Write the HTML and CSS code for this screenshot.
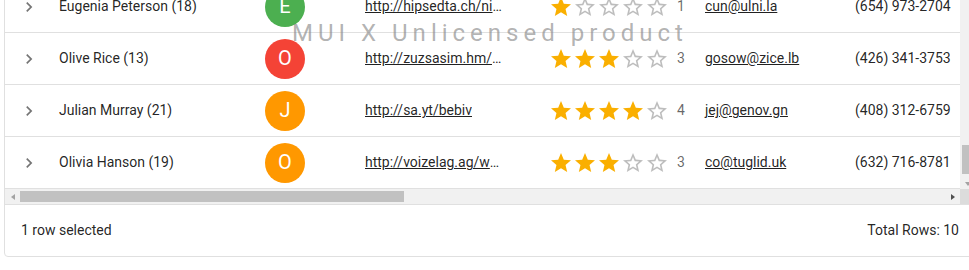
FILE: index.html
```html
<!DOCTYPE html>
<html lang="en">
<head>
    <meta charset="UTF-8">
    <meta name="viewport" content="width=device-width, initial-scale=1.0">
    <title>Data Grid</title>
    <link rel="stylesheet" href="styles.css">
</head>
<body>
    <svg class="defs" width="0" height="0">
        <symbol id="star" viewBox="0 0 24 24"><path d="M12 17.27L18.18 21l-1.64-7.03L22 9.24l-7.19-.61L12 2 9.19 8.63 2 9.24l5.46 4.73L5.82 21z"/></symbol>
        <symbol id="star-o" viewBox="0 0 24 24"><path d="M22 9.24l-7.19-.62L12 2 9.19 8.63 2 9.24l5.46 4.73L5.82 21 12 17.27 18.18 21l-1.63-7.03L22 9.24zM12 15.4l-3.76 2.27 1-4.28-3.32-2.88 4.38-.38L12 6.1l1.71 4.04 4.38.38-3.32 2.88 1 4.28L12 15.4z"/></symbol>
        <symbol id="chev" viewBox="0 0 24 24"><path d="M8.59 16.59L13.17 12 8.59 7.41 10 6l6 6-6 6-1.41-1.41z"/></symbol>
    </svg>

    <div class="grid">
        <div class="watermark">MUI X Unlicensed product</div>

        <div class="scroller">
            <div class="rows">
                <div class="row">
                    <div class="cell c-toggle"><svg class="chev"><use href="#chev"/></svg></div>
                    <div class="cell c-name">Eugenia Peterson (18)</div>
                    <div class="cell c-avatar"><span class="avatar green">E</span></div>
                    <div class="cell c-url"><a href="#">http://hipsedta.ch/nifuzup</a></div>
                    <div class="cell c-rating">
                        <svg class="star on"><use href="#star"/></svg><svg class="star"><use href="#star-o"/></svg><svg class="star"><use href="#star-o"/></svg><svg class="star"><use href="#star-o"/></svg><svg class="star"><use href="#star-o"/></svg>
                        <span class="num">1</span>
                    </div>
                    <div class="cell c-email"><a href="#">cun@ulni.la</a></div>
                    <div class="cell c-phone">(654) 973-2704</div>
                </div>
                <div class="row">
                    <div class="cell c-toggle"><svg class="chev"><use href="#chev"/></svg></div>
                    <div class="cell c-name">Olive Rice (13)</div>
                    <div class="cell c-avatar"><span class="avatar red">O</span></div>
                    <div class="cell c-url"><a href="#">http://zuzsasim.hm/dalo</a></div>
                    <div class="cell c-rating">
                        <svg class="star on"><use href="#star"/></svg><svg class="star on"><use href="#star"/></svg><svg class="star on"><use href="#star"/></svg><svg class="star"><use href="#star-o"/></svg><svg class="star"><use href="#star-o"/></svg>
                        <span class="num">3</span>
                    </div>
                    <div class="cell c-email"><a href="#">gosow@zice.lb</a></div>
                    <div class="cell c-phone">(426) 341-3753</div>
                </div>
                <div class="row">
                    <div class="cell c-toggle"><svg class="chev"><use href="#chev"/></svg></div>
                    <div class="cell c-name">Julian Murray (21)</div>
                    <div class="cell c-avatar"><span class="avatar orange">J</span></div>
                    <div class="cell c-url"><a href="#">http://sa.yt/bebiv</a></div>
                    <div class="cell c-rating">
                        <svg class="star on"><use href="#star"/></svg><svg class="star on"><use href="#star"/></svg><svg class="star on"><use href="#star"/></svg><svg class="star on"><use href="#star"/></svg><svg class="star"><use href="#star-o"/></svg>
                        <span class="num">4</span>
                    </div>
                    <div class="cell c-email"><a href="#">jej@genov.gn</a></div>
                    <div class="cell c-phone">(408) 312-6759</div>
                </div>
                <div class="row">
                    <div class="cell c-toggle"><svg class="chev"><use href="#chev"/></svg></div>
                    <div class="cell c-name">Olivia Hanson (19)</div>
                    <div class="cell c-avatar"><span class="avatar orange">O</span></div>
                    <div class="cell c-url"><a href="#">http://voizelag.ag/wuhki</a></div>
                    <div class="cell c-rating">
                        <svg class="star on"><use href="#star"/></svg><svg class="star on"><use href="#star"/></svg><svg class="star on"><use href="#star"/></svg><svg class="star"><use href="#star-o"/></svg><svg class="star"><use href="#star-o"/></svg>
                        <span class="num">3</span>
                    </div>
                    <div class="cell c-email"><a href="#">co@tuglid.uk</a></div>
                    <div class="cell c-phone">(632) 716-8781</div>
                </div>
            </div>

            <div class="vbar">
                <div class="track"></div>
                <div class="vthumb"></div>
                <div class="sb-btn"><span class="tri down"></span></div>
            </div>
        </div>

        <div class="hbar">
            <div class="sb-btn"><span class="tri left"></span></div>
            <div class="hthumb"></div>
            <div class="track"></div>
            <div class="sb-btn"><span class="tri right"></span></div>
            <div class="corner"></div>
        </div>

        <div class="footer">
            <span>1 row selected</span>
            <span>Total Rows: 10</span>
        </div>
    </div>
</body>
</html>
```

FILE: styles.css
```css
body {
    margin: 0;
    overflow: hidden;
    font-family: Roboto, "Liberation Sans", sans-serif;
    font-size: 14px;
    line-height: 1.43;
    color: rgba(0, 0, 0, 0.87);
    background: #fff;
}
.defs {
    position: absolute;
}
.grid {
    position: relative;
    width: 972px;
    margin: -20px 0 0 4px;
    border: 1px solid #e0e0e0;
    border-radius: 4px;
    box-sizing: border-box;
}
.watermark {
    position: absolute;
    top: 38px;
    left: 0;
    right: 0;
    text-align: center;
    font-size: 24px;
    line-height: 28px;
    letter-spacing: 5px;
    color: #8282829e;
    pointer-events: none;
    z-index: 10;
}
.scroller {
    display: flex;
}
.rows {
    flex: 1;
}
.row {
    display: flex;
    align-items: center;
    height: 52px;
    border-bottom: 1px solid #e0e0e0;
    box-sizing: border-box;
}
.cell {
    display: flex;
    align-items: center;
    box-sizing: border-box;
    white-space: nowrap;
}
.c-toggle {
    width: 48px;
    justify-content: center;
}
.chev {
    width: 20px;
    height: 20px;
    fill: rgba(0, 0, 0, 0.54);
}
.c-name {
    width: 202px;
    padding-left: 6px;
}
.c-avatar {
    width: 100px;
    padding-left: 10px;
}
.avatar {
    width: 40px;
    height: 40px;
    border-radius: 50%;
    display: flex;
    align-items: center;
    justify-content: center;
    color: #fff;
    font-size: 20px;
}
.green { background: #4caf50; }
.red { background: #f44336; }
.orange { background: #ff9800; }
.c-url {
    width: 160px;
    padding: 0 10px;
}
.c-url a {
    display: block;
    overflow: hidden;
    text-overflow: ellipsis;
    max-width: 140px;
}
a {
    color: rgba(0, 0, 0, 0.87);
    text-decoration: underline;
}
.c-rating {
    width: 180px;
    padding-left: 34px;
}
.star {
    width: 24px;
    height: 24px;
    fill: rgba(0, 0, 0, 0.26);
}
.star.on {
    fill: #faaf00;
}
.num {
    margin-left: 8px;
    color: rgba(0, 0, 0, 0.6);
}
.c-email {
    width: 150px;
    padding-left: 10px;
}
.c-phone {
    padding-left: 10px;
}
.vbar {
    width: 15px;
    display: flex;
    flex-direction: column;
    background: #f1f1f1;
}
.track {
    flex: 1;
}
.vthumb {
    height: 29px;
    margin: 0 2px;
    background: #c1c1c1;
}
.sb-btn {
    width: 15px;
    height: 15px;
    display: flex;
    align-items: center;
    justify-content: center;
}
.tri {
    width: 0;
    height: 0;
    border: 3.5px solid transparent;
}
.tri.down {
    border-top: 4px solid #a3a3a3;
    border-bottom: 0;
    margin-top: 4px;
}
.tri.left {
    border-right: 4px solid #a3a3a3;
    border-left: 0;
}
.tri.right {
    border-left: 4px solid #505050;
    border-right: 0;
}
.hbar {
    display: flex;
    height: 15px;
    background: #f1f1f1;
}
.hthumb {
    width: 384px;
    margin: 2px 0;
    background: #c1c1c1;
}
.corner {
    width: 15px;
    background: #dcdcdc;
}
.footer {
    display: flex;
    align-items: center;
    justify-content: space-between;
    height: 52px;
    padding: 0 16px;
    border-top: 1px solid #e0e0e0;
    box-sizing: border-box;
}
```
